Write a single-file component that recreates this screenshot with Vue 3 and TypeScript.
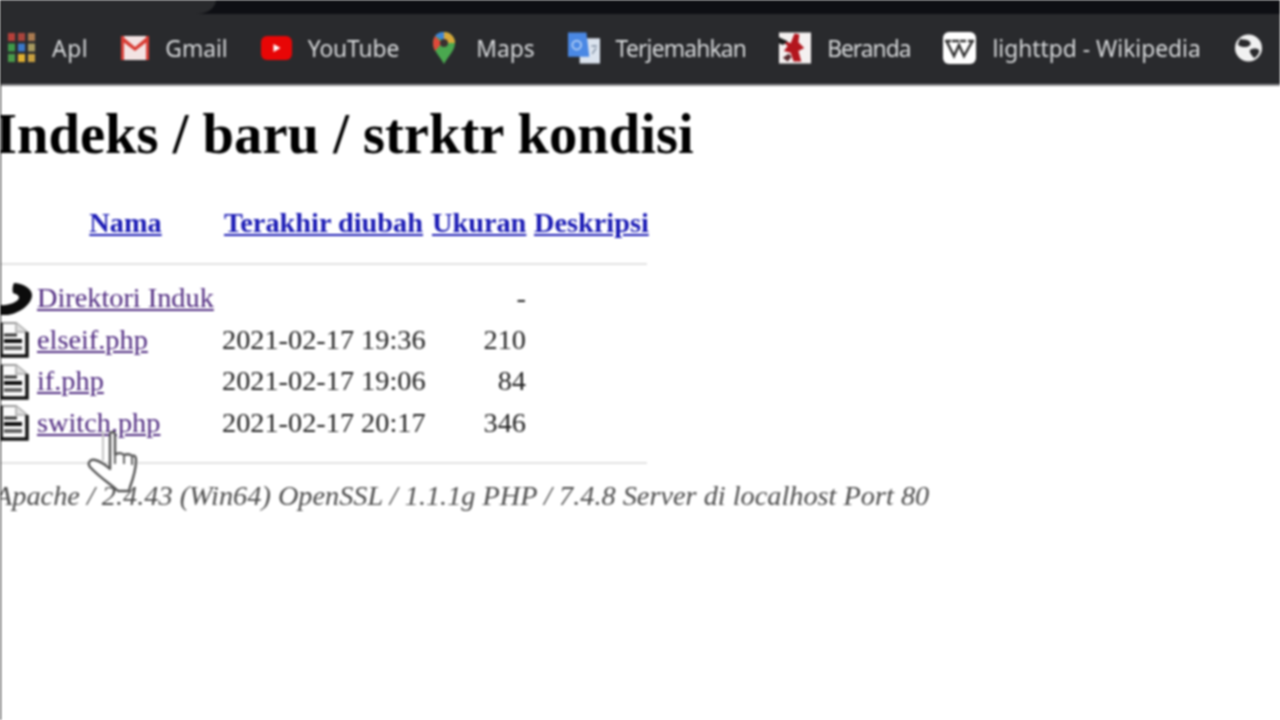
<script setup lang="ts">
// spacing evens out label widths against the font we have here
const bookmarks = [
  { name: 'Apl', icon: 'apps', spacing: 0.6 },
  { name: 'Gmail', icon: 'gmail', spacing: 0 },
  { name: 'YouTube', icon: 'youtube', spacing: -0.1 },
  { name: 'Maps', icon: 'maps', spacing: 0 },
  { name: 'Terjemahkan', icon: 'translate', spacing: -0.8 },
  { name: 'Beranda', icon: 'beranda', spacing: -1 },
  { name: 'lighttpd - Wikipedia', icon: 'wiki', spacing: 0 },
];

const appColors = ['#b5403a', '#a8443c', '#a87a50', '#3f9a4a', '#3c78c8', '#a89a60', '#4a9a4a', '#e0b030', '#c8a040'];

const files = [
  { name: 'elseif.php', date: '2021-02-17 19:36', size: '210' },
  { name: 'if.php', date: '2021-02-17 19:06', size: '84' },
  { name: 'switch.php', date: '2021-02-17 20:17', size: '346' },
];
</script>

<template>
  <div class="screen">
    <div class="tabstrip">
      <div class="active-tab"></div>
    </div>

    <nav class="toolbar">
      <a v-for="b in bookmarks" :key="b.name" class="bookmark">
        <svg v-if="b.icon === 'apps'" class="icon" width="29" height="32" viewBox="0 0 29 32">
          <rect v-for="(c, i) in appColors" :key="i" :x="1 + (i % 3) * 10" :y="1 + Math.floor(i / 3) * 10.500" width="7" height="8" :fill="c" />
        </svg>
        <svg v-else-if="b.icon === 'gmail'" class="icon" width="28" height="26" viewBox="0 0 28 26">
          <rect x="0" y="1" width="28" height="24" fill="#f3e3e3" />
          <path d="M0 1h3v24H0zM25 1h3v24h-3z" fill="#d8403a" />
          <path d="M1 1l13 11L27 1v5L14 16 1 6z" fill="#d83a32" />
        </svg>
        <svg v-else-if="b.icon === 'youtube'" class="icon" width="31" height="26" viewBox="0 0 31 26">
          <rect x="0" y="1" width="31" height="24" rx="6" fill="#e80606" />
          <path d="M12.500 9l7 4-7 4z" fill="#fff" />
        </svg>
        <svg v-else-if="b.icon === 'maps'" class="icon icon-maps" width="24" height="34" viewBox="0 0 24 34">
          <path d="M12 33C8 25 1 20 1 12a11 11 0 0 1 22 0c0 8-7 13-11 21z" fill="#4aa84f" />
          <path d="M3 5a11 11 0 0 1 9-4v9z" fill="#3f86d8" />
          <path d="M1 12c0-3 1-5 2-7l7 7-7 8c-1-2-2-5-2-8z" fill="#e0493a" />
          <path d="M12 1a11 11 0 0 1 11 11H12z" fill="#d8a83a" />
          <circle cx="12" cy="12" r="4" fill="#3a3030" />
        </svg>
        <svg v-else-if="b.icon === 'translate'" class="icon" width="32" height="32" viewBox="0 0 33 32">
          <rect x="12" y="6" width="21" height="26" fill="#dbe3ee" />
          <path d="M0 0h19l3 25H0z" fill="#4a88e4" />
          <circle cx="9" cy="13" r="4.500" fill="none" stroke="#a8c8f4" stroke-width="2" />
          <path d="M24 14h6M27 13v2M25 22l4-6" stroke="#8a98aa" stroke-width="1.600" fill="none" />
        </svg>
        <svg v-else-if="b.icon === 'beranda'" class="icon" width="32" height="32" viewBox="0 0 33 32">
          <rect width="33" height="32" fill="#f4f0f0" />
          <path d="M0 6l12 5 4-10 5 1-1 8 6 6-6 3 3 11h-8l-3-9-7-2 4-5z" fill="#b3161e" />
          <path d="M0 5l9 4-5 4-4-2z" fill="#1c1c1c" />
          <path d="M4 26l6-4 3 3-4 5z" fill="#5a2a2e" />
        </svg>
        <svg v-else-if="b.icon === 'wiki'" class="icon" width="33" height="32" viewBox="0 0 33 32">
          <rect width="33" height="32" rx="6" fill="#fff" />
          <path d="M4 10l7 14 5-11 5 11 8-14M2 9h6M9 9h7M17 9h6M25 9h6" fill="none" stroke="#333" stroke-width="2.500" />
        </svg>
        <span class="label" :style="{ letterSpacing: b.spacing + 'px' }">{{ b.name }}</span>
      </a>
      <svg class="globe" width="27" height="28" viewBox="0 0 27 28">
        <circle cx="13.500" cy="14" r="13.500" fill="#f1f1f1" />
        <path d="M5 5c4 1 8 0 10 3s-2 5-5 5-6 0-7-3zM15 16c3-2 7-2 9 0 1 2-2 7-5 8-2-3-5-5-4-8z" fill="#29292c" />
      </svg>
    </nav>

    <main class="page">
      <h1>Indeks / baru / strktr kondisi</h1>
      <table>
        <thead>
          <tr>
            <th class="c-icon"></th>
            <th class="c-name"><a>Nama</a></th>
            <th class="c-date"><a>Terakhir diubah</a></th>
            <th class="c-size"><a>Ukuran</a></th>
            <th class="c-desc"><a>Deskripsi</a></th>
          </tr>
          <tr class="rule rule-top"><th colspan="5"><hr /></th></tr>
        </thead>
        <tbody>
          <tr>
            <td class="c-icon">
              <svg width="34" height="36" viewBox="0 0 34 36">
                <path d="M14 3C22 3 32 8 32 15C32 24 20 33 8 35L0 35L0 25C8 26 18 22 19 18C19 15 16 14 13 13C12 9 13 5 14 3z" fill="#0c0c0c" />
              </svg>
            </td>
            <td><a class="visited">Direktori Induk</a></td>
            <td></td>
            <td class="num">-</td>
            <td></td>
          </tr>
          <tr v-for="f in files" :key="f.name">
            <td class="c-icon">
              <svg width="29" height="38" viewBox="0 0 29 38">
                <path d="M0 3h16l11 9v24H0z" fill="#fbfbfb" />
                <path d="M0 3h16l11 9" fill="none" stroke="#999" stroke-width="2" />
                <path d="M16 3v9h11" fill="#ddd" stroke="#aaa" stroke-width="1.500" />
                <path d="M27 12v24H0M1 3v33" fill="none" stroke="#111" stroke-width="3.500" />
                <path d="M4 15h13" stroke="#333" stroke-width="3" />
                <path d="M4 21h18" stroke="#111" stroke-width="4" />
                <path d="M4 28h18" stroke="#666" stroke-width="4" />
              </svg>
            </td>
            <td><a class="visited">{{ f.name }}</a></td>
            <td>{{ f.date }}</td>
            <td class="num">{{ f.size }}</td>
            <td></td>
          </tr>
          <tr class="rule rule-bottom"><th colspan="5"><hr /></th></tr>
        </tbody>
      </table>
      <address>Apache / 2.4.43 (Win64) OpenSSL / 1.1.1g PHP / 7.4.8 Server di localhost Port 80</address>

      <svg class="pointer" width="54" height="64" viewBox="0 0 54 64">
        <path d="M17 0v30" fill="none" stroke="#c4c4c4" stroke-width="2" />
        <path d="M24 4c0-4 5-4 5 0v20c3-3 7-2 9 0 3-1 6-1 8 1 3-1 4 1 4 4 0 9-3 19-6 27l-1 4H32c-6-6-18-13-28-24-3-4 0-8 5-7 5 1 12 6 15 9z" fill="#fff" stroke="#555" stroke-width="2.400" stroke-linejoin="round" />
        <path d="M29 24v9M38 24v9M46 25v9" fill="none" stroke="#666" stroke-width="2" />
      </svg>
    </main>
  </div>
</template>

<style>
html,
body {
  margin: 0;
  background: #fff;
  overflow: hidden;
}
</style>

<style scoped>
.screen {
  width: 1280px;
  height: 720px;
  box-sizing: border-box;
  border-left: 1px solid #111;
  overflow: hidden;
  background: #fff;
  filter: blur(0.85px);
}

.tabstrip {
  height: 14px;
  background: #0e0f14;
}

.active-tab {
  width: 215px;
  height: 14px;
  background: #292a2d;
  border-bottom-right-radius: 20px 14px;
}

.toolbar {
  height: 72px;
  box-sizing: border-box;
  background: #292a2d;
  border-bottom: 2px solid #8d8d8f;
  display: flex;
  align-items: center;
  gap: 33px;
  padding: 0 0 2px 6px;
  font-family: "Noto Sans", sans-serif;
  font-size: 22.800px;
  color: #d8dadc;
}

.bookmark {
  display: flex;
  align-items: center;
  gap: 16px;
  white-space: nowrap;
}

.icon,
.globe {
  flex: none;
  display: block;
}

.icon-maps {
  margin-right: 4px;
}

.globe {
  margin-left: 1px;
}

.page {
  position: relative;
  margin-left: -6px;
  font-family: "Liberation Serif", serif;
  color: #222;
}

h1 {
  margin: 0;
  padding-top: 18px;
  font-size: 56.600px;
  line-height: 60px;
  font-weight: 700;
  color: #000;
  white-space: nowrap;
}

table {
  border-collapse: collapse;
  margin-top: 38px;
  table-layout: fixed;
  width: 652px;
  font-size: 28.300px;
  line-height: 41.500px;
}

th {
  font-weight: 700;
  padding: 0;
  white-space: nowrap;
}

td {
  padding: 0;
  white-space: nowrap;
  vertical-align: middle;
}

th a {
  color: #1b1bb5;
  text-decoration: underline;
}

.visited {
  color: #4f2a80;
  text-decoration: underline;
}

.c-icon {
  width: 42px;
  text-align: left;
}

.c-icon svg {
  display: block;
  margin-left: 5px;
}

.c-name {
  width: 185px;
  padding-right: 8px;
  box-sizing: border-box;
}

.c-date {
  width: 210px;
  padding-right: 7px;
  box-sizing: border-box;
}

.c-size {
  width: 94px;
}

.c-desc {
  width: 121px;
  padding-left: 8px;
  box-sizing: border-box;
  text-align: left;
}

.num {
  text-align: right;
}

.rule th {
  vertical-align: middle;
}

.rule-top th {
  height: 33.500px;
}

.rule-top hr {
  margin-top: 7px;
}

.rule-bottom th {
  height: 36px;
}

.rule-bottom hr {
  margin-top: 3px;
}

hr {
  margin: 0;
  border: 0;
  border-top: 2px solid #e2e2e2;
}

address {
  margin-top: 2px;
  font-size: 28.300px;
  line-height: 30px;
  font-style: italic;
  color: #4c4c4c;
  white-space: nowrap;
}

.pointer {
  position: absolute;
  left: 91px;
  top: 345px;
}
</style>
